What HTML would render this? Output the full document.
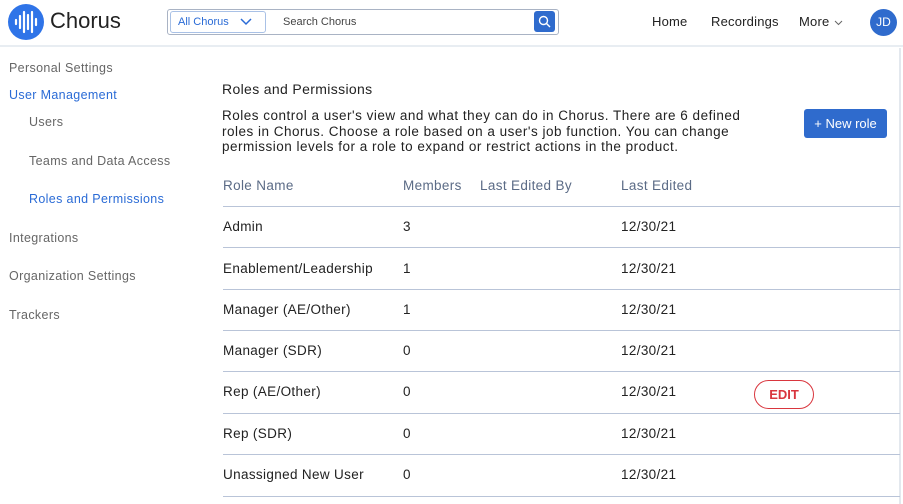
<!DOCTYPE html>
<html><head><style>
*{margin:0;padding:0;box-sizing:border-box}
body{width:903px;height:504px;overflow:hidden;background:#fff;font-family:"Liberation Sans",sans-serif;color:#222;position:relative;letter-spacing:0.35px}
.abs{position:absolute;white-space:nowrap}
.hdr{position:absolute;left:0;top:0;width:903px;height:47px;border-bottom:2px solid #e8edf2}
.side{font-size:12.5px;color:#666}
.blue{color:#2a6bd6}
.row{position:absolute;left:223px;width:677px;height:1px;background:#b9c4d8}
.cell{position:absolute;font-size:13.5px;color:#222;white-space:nowrap}
.th{position:absolute;font-size:13.5px;color:#5b6b86;white-space:nowrap}
</style></head><body>
<div class="hdr"></div>
<svg class="abs" style="left:8px;top:4px" width="36" height="36" viewBox="0 0 36 36">
<circle cx="18" cy="18" r="18" fill="#2f74e8"/>
<g stroke="#fff" stroke-width="2.2" stroke-linecap="round">
<line x1="8" y1="16" x2="8" y2="20"/><line x1="12" y1="12" x2="12" y2="24"/><line x1="16" y1="8" x2="16" y2="28"/><line x1="20" y1="11" x2="20" y2="25"/><line x1="24" y1="8" x2="24" y2="28"/><line x1="28" y1="15" x2="28" y2="21"/></g></svg>
<div class="abs" style="left:50px;top:8px;font-size:22px;color:#222;letter-spacing:0">Chorus</div>
<div class="abs" style="left:167px;top:9px;width:392px;height:26px;border:1px solid #a9b3c4;border-radius:3px"></div>
<div class="abs" style="left:170px;top:11px;width:96px;height:22px;border:1px solid #a9c1e6;border-radius:3px"></div>
<div class="abs blue" style="left:178px;top:16px;font-size:11px;letter-spacing:0">All Chorus</div>
<svg class="abs" style="left:240px;top:18px" width="12" height="8"><path d="M1 1 L6 6 L11 1" stroke="#2a6bd6" stroke-width="1.5" fill="none"/></svg>
<div class="abs" style="left:283px;top:16px;font-size:11px;color:#444;letter-spacing:0">Search Chorus</div>
<div class="abs" style="left:534px;top:11px;width:21px;height:21px;background:#2f6bcd;border-radius:3px"></div>
<svg class="abs" style="left:538px;top:15px" width="13" height="13"><circle cx="5.5" cy="5.5" r="4" stroke="#fff" stroke-width="1.4" fill="none"/><line x1="8.5" y1="8.5" x2="12" y2="12" stroke="#fff" stroke-width="1.4"/></svg>
<div class="abs" style="left:652px;top:14px;font-size:13px;letter-spacing:0.2px">Home</div>
<div class="abs" style="left:711px;top:14px;font-size:13px;letter-spacing:0.2px">Recordings</div>
<div class="abs" style="left:799px;top:14px;font-size:13px;letter-spacing:0.2px">More</div>
<svg class="abs" style="left:834px;top:20px" width="9" height="6"><path d="M1 1 L4.5 4.5 L8 1" stroke="#666" stroke-width="1" fill="none"/></svg>
<div class="abs" style="left:870px;top:9px;width:27px;height:27px;border-radius:50%;background:#2f6bcd;color:#fff;font-size:12px;text-align:center;line-height:27px;letter-spacing:0">JD</div>
<div class="abs" style="left:899px;top:48px;width:2px;height:456px;background:#e3e8ee"></div>

<div class="abs side" style="left:9px;top:61px">Personal Settings</div>
<div class="abs side blue" style="left:9px;top:88px">User Management</div>
<div class="abs side" style="left:29px;top:115px">Users</div>
<div class="abs side" style="left:29px;top:154px">Teams and Data Access</div>
<div class="abs side blue" style="left:29px;top:192px">Roles and Permissions</div>
<div class="abs side" style="left:9px;top:231px">Integrations</div>
<div class="abs side" style="left:9px;top:269px">Organization Settings</div>
<div class="abs side" style="left:9px;top:308px">Trackers</div>

<div class="abs" style="left:222px;top:81px;font-size:14px">Roles and Permissions</div>
<div class="abs" style="left:222px;top:108px;font-size:13.5px;line-height:15.5px;white-space:normal;width:525px;letter-spacing:0.5px">Roles control a user's view and what they can do in Chorus. There are 6 defined roles in Chorus. Choose a role based on a user's job function. You can change permission levels for a role to expand or restrict actions in the product.</div>
<div class="abs" style="left:804px;top:109px;width:83px;height:29px;background:#2f6bcd;border-radius:3px;color:#fff;font-size:13px;text-align:center;line-height:29px;letter-spacing:0">+ New role</div>

<div class="th" style="left:223px;top:178px">Role Name</div>
<div class="th" style="left:403px;top:178px">Members</div>
<div class="th" style="left:480px;top:178px">Last Edited By</div>
<div class="th" style="left:621px;top:178px">Last Edited</div>

<div class="row" style="top:206px"></div>
<div class="row" style="top:247px"></div>
<div class="row" style="top:289px"></div>
<div class="row" style="top:330px"></div>
<div class="row" style="top:371px"></div>
<div class="row" style="top:413px"></div>
<div class="row" style="top:454px"></div>
<div class="row" style="top:496px"></div>

<div class="cell" style="left:223px;top:219px">Admin</div><div class="cell" style="left:403px;top:219px">3</div><div class="cell" style="left:621px;top:219px">12/30/21</div>
<div class="cell" style="left:223px;top:261px">Enablement/Leadership</div><div class="cell" style="left:403px;top:261px">1</div><div class="cell" style="left:621px;top:261px">12/30/21</div>
<div class="cell" style="left:223px;top:302px">Manager (AE/Other)</div><div class="cell" style="left:403px;top:302px">1</div><div class="cell" style="left:621px;top:302px">12/30/21</div>
<div class="cell" style="left:223px;top:343px">Manager (SDR)</div><div class="cell" style="left:403px;top:343px">0</div><div class="cell" style="left:621px;top:343px">12/30/21</div>
<div class="cell" style="left:223px;top:384px">Rep (AE/Other)</div><div class="cell" style="left:403px;top:384px">0</div><div class="cell" style="left:621px;top:384px">12/30/21</div>
<div class="cell" style="left:223px;top:426px">Rep (SDR)</div><div class="cell" style="left:403px;top:426px">0</div><div class="cell" style="left:621px;top:426px">12/30/21</div>
<div class="cell" style="left:223px;top:467px">Unassigned New User</div><div class="cell" style="left:403px;top:467px">0</div><div class="cell" style="left:621px;top:467px">12/30/21</div>

<div class="abs" style="left:754px;top:380px;width:60px;height:29px;border:1px solid #d9363e;border-radius:15px;color:#d9363e;font-size:13px;font-weight:bold;text-align:center;line-height:27px;letter-spacing:0">EDIT</div>
</body></html>
